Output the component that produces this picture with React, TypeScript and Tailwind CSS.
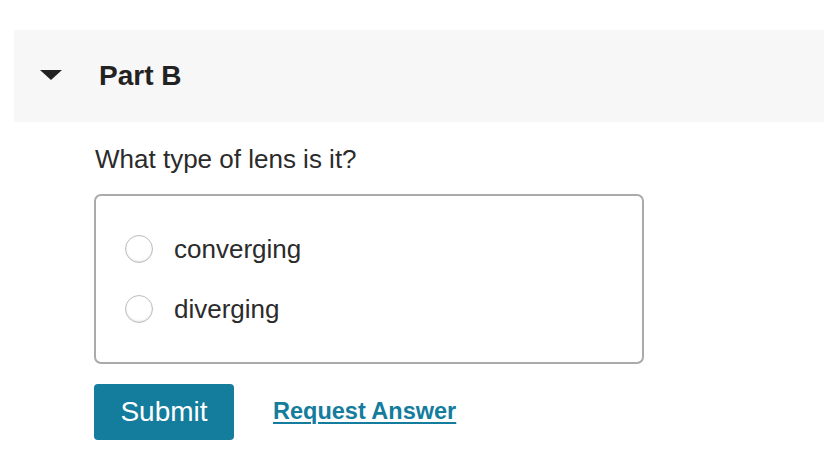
import React, { useState } from 'react';

function App() {
  const [choice, setChoice] = useState<string | null>(null);
  const options = ['converging', 'diverging'];

  return (
    <div className="w-[824px] h-[462px] bg-white overflow-hidden font-['Liberation_Sans',Arial,sans-serif] text-[#2b2b2b]">
      <div className="pt-[30px] pl-[14px]">
        <div className="h-[92px] bg-[#f7f7f7] flex items-center">
          <svg className="ml-[26px] mt-[-2px]" width="22" height="10" viewBox="0 0 22 10">
            <polygon points="0,0 22,0 11,10" fill="#222" />
          </svg>
          <h2 className="ml-[37px] text-[28px] font-bold text-[#222]">Part B</h2>
        </div>
      </div>

      <div className="pl-[94px]">
        <p className="mt-[22px] ml-[1px] text-[26px] leading-[30px]">What type of lens is it?</p>

        <div className="mt-[20px] w-[550px] h-[170px] border-2 border-[#aaaaaa] rounded-[7px] pt-[38px] pl-[29px]">
          {options.map((opt) => (
            <label key={opt} className="flex items-center h-[30px] mb-[30px] cursor-pointer">
              <span
                onClick={() => setChoice(opt)}
                className="w-[28px] h-[28px] rounded-full border border-[#bdbdbd] bg-white shadow-[inset_0_-1px_2px_rgba(0,0,0,0.12)] flex items-center justify-center"
              >
                {choice === opt && <span className="w-[12px] h-[12px] rounded-full bg-[#147c9c]" />}
              </span>
              <span className="ml-[21px] text-[26px]">{opt}</span>
            </label>
          ))}
        </div>

        <div className="mt-[20px] flex items-center">
          <button className="w-[140px] h-[56px] bg-[#147c9c] rounded-[4px] text-white text-[28px]">
            Submit
          </button>
          <a href="#" className="ml-[39px] text-[23.5px] font-bold text-[#147c9c] underline underline-offset-[3px] decoration-2">
            Request Answer
          </a>
        </div>
      </div>
    </div>
  );
}

export default App;
